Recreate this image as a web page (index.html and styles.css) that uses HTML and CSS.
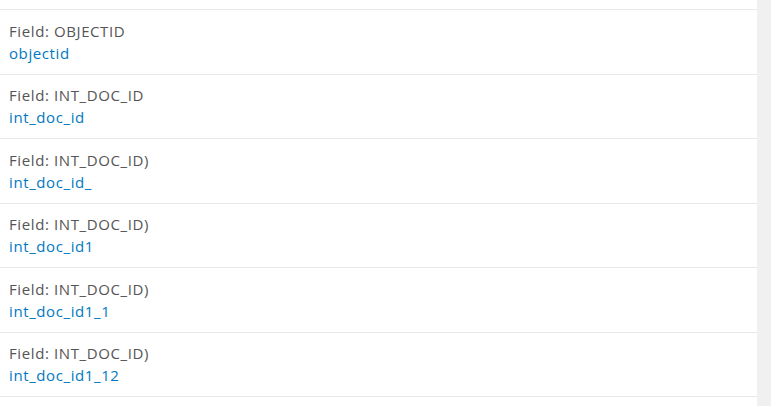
FILE: index.html
```html
<!DOCTYPE html>
<html>
<head>
<meta charset="utf-8">
<link rel="stylesheet" href="styles.css">
</head>
<body>
<div class="frame">
  <div class="list">
    <div class="row row-cut"></div>
    <div class="row"><div class="label">Field: OBJECTID</div><div class="name">objectid</div></div>
    <div class="row"><div class="label">Field: INT_DOC_ID</div><div class="name">int_doc_id</div></div>
    <div class="row"><div class="label">Field: INT_DOC_ID)</div><div class="name">int_doc_id_</div></div>
    <div class="row"><div class="label">Field: INT_DOC_ID)</div><div class="name">int_doc_id1</div></div>
    <div class="row"><div class="label">Field: INT_DOC_ID)</div><div class="name">int_doc_id1_1</div></div>
    <div class="row"><div class="label">Field: INT_DOC_ID)</div><div class="name">int_doc_id1_12</div></div>
  </div>
  <div class="scrollbar"></div>
</div>
</body>
</html>
```

FILE: styles.css
```css
html, body {
  margin: 0;
  padding: 0;
  background: #ffffff;
}
.frame {
  display: flex;
  width: 771px;
  height: 406px;
  overflow: hidden;
}
.list {
  flex: 1;
  display: flex;
  flex-direction: column;
  background: #ffffff;
}
.row {
  border-bottom: 1px solid #e8e8e8;
  padding: 9.5px 9px 10px;
  font-family: "Open Sans", "Liberation Sans", sans-serif;
  font-size: 15px;
  font-weight: 400;
  letter-spacing: 0.6px;
  line-height: 22px;
}
.row-cut {
  flex: none;
  padding: 0;
  box-sizing: border-box;
  height: 10px;
}
.label {
  color: #555555;
}
.name {
  color: #0079c1;
}
.scrollbar {
  width: 14px;
  background: #f0f0f0;
}
```
